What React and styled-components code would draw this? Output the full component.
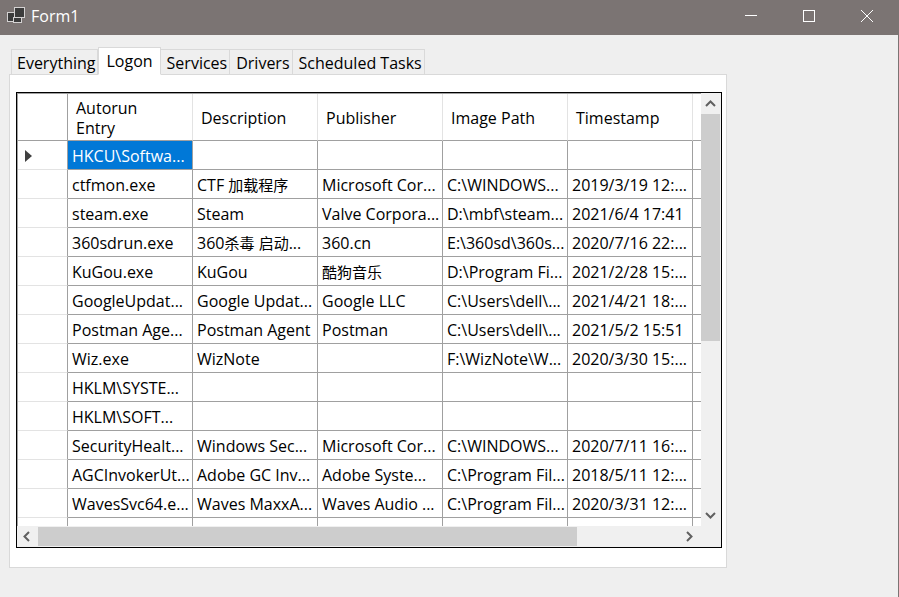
import React, { useState } from "react"
import styled, { createGlobalStyle } from "styled-components"

const tabs = ["Everything", "Logon", "Services", "Drivers", "Scheduled Tasks"]

const columns = [
  "Autorun Entry",
  "Description",
  "Publisher",
  "Image Path",
  "Timestamp",
]

const rows = [
  ["HKCU\\Softwa...", "", "", "", ""],
  ["ctfmon.exe", "CTF 加载程序", "Microsoft Cor...", "C:\\WINDOWS...", "2019/3/19 12:..."],
  ["steam.exe", "Steam", "Valve Corpora...", "D:\\mbf\\steam...", "2021/6/4 17:41"],
  ["360sdrun.exe", "360杀毒 启动...", "360.cn", "E:\\360sd\\360s...", "2020/7/16 22:..."],
  ["KuGou.exe", "KuGou", "酷狗音乐", "D:\\Program Fi...", "2021/2/28 15:..."],
  ["GoogleUpdat...", "Google Updat...", "Google LLC", "C:\\Users\\dell\\...", "2021/4/21 18:..."],
  ["Postman Age...", "Postman Agent", "Postman", "C:\\Users\\dell\\...", "2021/5/2 15:51"],
  ["Wiz.exe", "WizNote", "", "F:\\WizNote\\W...", "2020/3/30 15:..."],
  ["HKLM\\SYSTE...", "", "", "", ""],
  ["HKLM\\SOFT...", "", "", "", ""],
  ["SecurityHealt...", "Windows Sec...", "Microsoft Cor...", "C:\\WINDOWS...", "2020/7/11 16:..."],
  ["AGCInvokerUt...", "Adobe GC Inv...", "Adobe Syste...", "C:\\Program Fil...", "2018/5/11 12:..."],
  ["WavesSvc64.e...", "Waves MaxxA...", "Waves Audio ...", "C:\\Program Fil...", "2020/3/31 12:..."],
  ["", "", "", "", ""],
]

const arrows = {
  up: "M1 8L5.5 3.5L10 8",
  down: "M1 3L5.5 7.5L10 3",
  left: "M7 1L2.5 5.5L7 10",
  right: "M2 1L6.5 5.5L2 10",
}

function Arrow({ to }) {
  return (
    <svg width="11" height="11" viewBox="0 0 11 11" fill="none">
      <path d={arrows[to]} stroke="#606060" strokeWidth="2" />
    </svg>
  )
}

// Chinese runs are set one size below the latin text
function CellText({ text }) {
  return text
    .split(/([\u4e00-\u9fff]+)/)
    .map((part, i) =>
      i % 2 ? (
        <Hanzi key={i} lang="zh-CN">
          {part}
        </Hanzi>
      ) : (
        part
      )
    )
}

export default function App() {
  const [tab, setTab] = useState("Logon")
  const [selected, setSelected] = useState("0-0")
  const currentRow = Number(selected.split("-")[0])

  return (
    <>
      <GlobalStyle />
      <Window>
        <TitleBar>
          <svg width="18" height="18" viewBox="0 0 18 18" fill="#3c3c3c" stroke="#d4d2d2">
            <rect x="0.5" y="5.5" width="8" height="9" />
            <rect x="6.5" y="10.5" width="8" height="5" />
            <rect x="7.5" y="0.5" width="10" height="10" />
          </svg>
          <Title>Form1</Title>
          <WindowButton aria-label="Minimize">
            <svg width="12" height="12" viewBox="0 0 12 12" stroke="#fff">
              <path d="M0 5.5H12" />
            </svg>
          </WindowButton>
          <WindowButton aria-label="Maximize">
            <svg width="12" height="12" viewBox="0 0 12 12" stroke="#fff" fill="none">
              <rect x="0.5" y="0.5" width="11" height="11" />
            </svg>
          </WindowButton>
          <WindowButton aria-label="Close">
            <svg width="12" height="12" viewBox="0 0 12 12" stroke="#fff">
              <path d="M0 0L12 12M12 0L0 12" />
            </svg>
          </WindowButton>
        </TitleBar>
        <Content>
          <TabList role="tablist">
            {tabs.map((name) => (
              <Tab
                key={name}
                role="tab"
                aria-selected={tab === name}
                $active={tab === name}
                onClick={() => setTab(name)}
              >
                {name}
              </Tab>
            ))}
          </TabList>
          <TabPanel role="tabpanel" aria-label={tab}>
            <GridFrame>
              <Viewport>
                <Table>
                  <colgroup>
                    <Col $width="50px" />
                    {columns.map((name) => (
                      <Col key={name} $width="125px" />
                    ))}
                    <Col $width="125px" />
                  </colgroup>
                  <thead>
                    <tr>
                      <HeadCell $corner />
                      {columns.map((name) => (
                        <HeadCell key={name} scope="col">
                          <HeadText>{name}</HeadText>
                        </HeadCell>
                      ))}
                      <HeadCell />
                    </tr>
                  </thead>
                  <tbody>
                    {rows.map((row, i) => (
                      <tr key={i}>
                        <RowHead scope="row">
                          {i === currentRow && (
                            <svg width="7" height="12" viewBox="0 0 7 12" fill="#404040">
                              <path d="M0 0L7 6L0 12Z" />
                            </svg>
                          )}
                        </RowHead>
                        {row.map((text, j) => (
                          <Cell
                            key={j}
                            $selected={selected === `${i}-${j}`}
                            onClick={() => setSelected(`${i}-${j}`)}
                          >
                            <CellText text={text} />
                          </Cell>
                        ))}
                        <Cell />
                      </tr>
                    ))}
                  </tbody>
                </Table>
              </Viewport>
              <ScrollBar $vertical>
                <ScrollButton aria-label="Scroll up">
                  <Arrow to="up" />
                </ScrollButton>
                <Track>
                  <Thumb $vertical $size="58%" />
                </Track>
                <ScrollButton aria-label="Scroll down">
                  <Arrow to="down" />
                </ScrollButton>
              </ScrollBar>
              <ScrollBar>
                <ScrollButton aria-label="Scroll left">
                  <Arrow to="left" />
                </ScrollButton>
                <Track>
                  <Thumb $size="84%" />
                </Track>
                <ScrollButton aria-label="Scroll right">
                  <Arrow to="right" />
                </ScrollButton>
              </ScrollBar>
            </GridFrame>
          </TabPanel>
        </Content>
      </Window>
    </>
  )
}

const GlobalStyle = createGlobalStyle`
  * {
    box-sizing: border-box;
  }
  body {
    margin: 0;
    color: #000;
    font-family: "Open Sans", "Noto Sans CJK SC", sans-serif;
    font-size: 16px;
    line-height: 20px;
  }
  button {
    margin: 0;
    padding: 0;
    border: 0;
    color: inherit;
    font: inherit;
  }
  svg {
    display: block;
  }
`
const Window = styled.div`
  display: flex;
  flex-direction: column;
  height: 100vh;
  border-right: 1px solid #7b7473;
  background: #efefef;
`
const TitleBar = styled.header`
  display: flex;
  flex: none;
  align-items: center;
  height: 35px;
  padding: 0 2px 3px 7px;
  background: #7b7473;
  color: #fff;
`
const Title = styled.h1`
  flex: 1;
  margin: 0 0 0 6px;
  font-size: 16px;
  font-weight: normal;
`
const WindowButton = styled.button`
  display: flex;
  align-items: center;
  justify-content: center;
  width: 58px;
  height: 32px;
  background: transparent;
`
const Content = styled.main`
  display: flex;
  flex: 1;
  flex-direction: column;
  min-height: 0;
  padding: 11px 171px 29px 9px;
`
const TabList = styled.div`
  display: flex;
  flex: none;
  align-items: flex-end;
  height: 28px;
  padding-left: 2px;
`
const Tab = styled.button`
  position: relative;
  height: ${(props) => (props.$active ? "28px" : "26px")};
  padding: ${(props) => (props.$active ? "0 7px" : "2px 2px 0 6px")};
  margin-bottom: -1px;
  border: 1px solid #d9d9d9;
  border-left-width: ${(props) => (props.$active ? "1px" : "0")};
  border-bottom-color: ${(props) => (props.$active ? "#fff" : "#d9d9d9")};
  background: ${(props) => (props.$active ? "#fff" : "#efefef")};
  white-space: nowrap;
  &:first-child {
    padding-left: 5px;
    border-left-width: 1px;
  }
`
const TabPanel = styled.section`
  display: flex;
  flex: 1;
  min-height: 0;
  padding: 17px 4px 19px 6px;
  border: 1px solid #d9d9d9;
  background: #fff;
`
const GridFrame = styled.div`
  display: grid;
  flex: 1;
  grid-template-columns: minmax(0, 1fr) 20px;
  grid-template-rows: minmax(0, 1fr) 21px;
  min-width: 0;
  border: 1px solid #000;
  background: #f0f0f0;
`
const Viewport = styled.div`
  overflow: hidden;
  border-top: 1px solid #a0a0a0;
  border-left: 1px solid #a0a0a0;
  background: #fff;
`
const Table = styled.table`
  width: 800px;
  border-collapse: separate;
  border-spacing: 0;
  table-layout: fixed;
`
const Col = styled.col`
  width: ${(props) => props.$width};
`
const HeadCell = styled.th`
  height: 47px;
  padding: 2px 8px 0;
  border-right: 1px solid ${(props) => (props.$corner ? "#a0a0a0" : "#e3e3e3")};
  border-bottom: 1px solid #a0a0a0;
  font-weight: normal;
  text-align: left;
`
const HeadText = styled.span`
  display: block;
  max-width: 92px;
`
const RowHead = styled.th`
  height: 29px;
  padding: 2px 7px 0;
  border-right: 1px solid #a0a0a0;
  border-bottom: 1px solid #e3e3e3;
`
const Cell = styled.td`
  height: 29px;
  padding: 1px 0 0 4px;
  overflow: hidden;
  border-right: 1px solid #a0a0a0;
  border-bottom: 1px solid #a0a0a0;
  background: ${(props) => (props.$selected ? "#0078d7" : "#fff")};
  color: ${(props) => (props.$selected ? "#fff" : "#000")};
  white-space: nowrap;
`
const Hanzi = styled.span`
  font-size: 15px;
`
const ScrollBar = styled.div`
  display: flex;
  flex-direction: ${(props) => (props.$vertical ? "column" : "row")};
  padding: ${(props) => (props.$vertical ? "0 1px 0 0" : "1px 0")};
`
const ScrollButton = styled.button`
  display: flex;
  flex: 0 0 21px;
  align-items: center;
  justify-content: center;
  background: #f0f0f0;
`
const Track = styled.div`
  flex: 1;
`
const Thumb = styled.div`
  width: ${(props) => (props.$vertical ? "100%" : props.$size)};
  height: ${(props) => (props.$vertical ? props.$size : "100%")};
  background: #cdcdcd;
`
